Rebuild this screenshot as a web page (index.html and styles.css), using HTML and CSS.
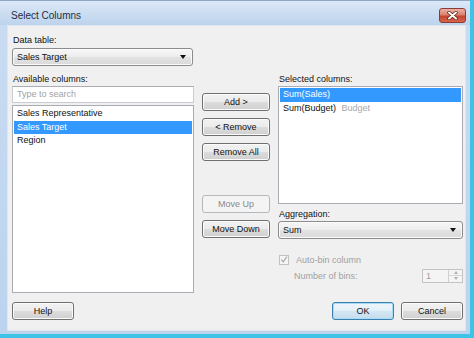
FILE: index.html
```html
<!DOCTYPE html>
<html lang="en">
  <head>
    <meta charset="UTF-8" />
    <title>Select Columns</title>
    <link rel="stylesheet" href="styles.css">
  </head>
  <body>
    <div class="window">
      <div class="titlebar">
        <span class="title">Select Columns</span>
        <div class="close">
          <svg width="11" height="9" viewBox="0 0 11 9">
            <path d="M2 1.5 L9 7.5 M9 1.5 L2 7.5" stroke="#5a1c14" stroke-width="3.4" stroke-linecap="round" />
            <path d="M2 1.5 L9 7.5 M9 1.5 L2 7.5" stroke="#ffffff" stroke-width="2" stroke-linecap="round" />
          </svg>
        </div>
      </div>

      <div class="panel">
        <div class="top">
          <div class="label">Data table:</div>
          <div class="combo left-combo">
            <span>Sales Target</span>
            <span class="arrow"></span>
          </div>
        </div>

        <div class="columns">
          <div class="col">
            <div class="label">Available columns:</div>
            <div class="search">Type to search</div>
            <ul class="list available">
              <li>Sales Representative</li>
              <li class="selected">Sales Target</li>
              <li>Region</li>
            </ul>
          </div>

          <div class="col actions">
            <button>Add &gt;</button>
            <button>&lt; Remove</button>
            <button>Remove All</button>
            <button class="disabled move-up">Move Up</button>
            <button>Move Down</button>
          </div>

          <div class="col">
            <div class="label">Selected columns:</div>
            <ul class="list chosen">
              <li class="selected">Sum(Sales)</li>
              <li>Sum(Budget) <span class="hint">Budget</span></li>
            </ul>
            <div class="label agg-label">Aggregation:</div>
            <div class="combo">
              <span>Sum</span>
              <span class="arrow"></span>
            </div>
            <div class="check-row">
              <span class="checkbox">
                <svg width="9" height="9" viewBox="0 0 9 9">
                  <path d="M1.5 4.5 L3.6 7 L7.8 1.2" fill="none" stroke="#a8a8a8" stroke-width="1.3" />
                </svg>
              </span>
              <span>Auto-bin column</span>
            </div>
            <div class="bins-row">
              <span>Number of bins:</span>
              <div class="spin">
                <span class="spin-value">1</span>
                <div class="spin-buttons">
                  <span class="up"></span>
                  <span class="down"></span>
                </div>
              </div>
            </div>
          </div>
        </div>

        <div class="footer">
          <button class="wide">Help</button>
          <div class="spacer"></div>
          <button class="wide default">OK</button>
          <button class="wide">Cancel</button>
        </div>
      </div>
    </div>
  </body>
</html>
```

FILE: styles.css
```css
* {
  margin: 0;
  padding: 0;
  box-sizing: border-box;
}
html,
body {
  width: 474px;
  height: 338px;
  overflow: hidden;
  background: #3cc3e6;
  font-family: "Liberation Sans", Arial, sans-serif;
  font-size: 9px;
  color: #111;
}
.window {
  width: 470px;
  height: 334px;
  display: flex;
  flex-direction: column;
  background: linear-gradient(#c9dcf2, #bcd3ee);
  border-top: 1px solid #8ea7c4;
}
.titlebar {
  height: 24px;
  display: flex;
  align-items: center;
  justify-content: space-between;
  padding: 5px 4px 0 11px;
  background: linear-gradient(#dbe8f7, #bdd3ec);
}
.title {
  font-size: 10px;
  color: #1e2d45;
}
.close {
  width: 27px;
  height: 15px;
  border: 1px solid #8c3b33;
  border-radius: 3px;
  background: linear-gradient(#eab2a5 0%, #d9826f 45%, #c5452f 55%, #d5654c 100%);
  display: flex;
  align-items: center;
  justify-content: center;
}
.panel {
  flex: 1;
  margin: 0 4px 3px 7px;
  background: #f0f0f0;
  border: 1px solid #dfe6ee;
  padding: 8px 2px 0 4px;
  display: flex;
  flex-direction: column;
}
.label {
  height: 13px;
  line-height: 13px;
  padding-left: 1px;
}
.combo {
  height: 18px;
  display: flex;
  align-items: center;
  justify-content: space-between;
  padding: 0 6px 0 4px;
  border: 1px solid #8c8c8c;
  border-radius: 3px;
  background: linear-gradient(#f6f6f6 0%, #ededed 50%, #e2e2e2 50%, #dadada 100%);
  box-shadow: inset 0 0 0 1px #fbfbfb;
}
.left-combo {
  width: 181px;
  margin-top: 1px;
}
.arrow {
  width: 0;
  height: 0;
  border-left: 3.5px solid transparent;
  border-right: 3.5px solid transparent;
  border-top: 4px solid #111;
}
.columns {
  margin-top: 7px;
  display: grid;
  grid-template-columns: 182px 68px 185px;
  column-gap: 8px;
  align-items: start;
}
.col {
  display: flex;
  flex-direction: column;
}
.search {
  height: 17px;
  padding: 0 4px;
  line-height: 15px;
  border: 1px solid #c9ccd2;
  border-top-color: #abadb3;
  background: #fff;
  color: #a2a2a2;
}
.list {
  list-style: none;
  background: #fff;
  border: 1px solid #a9acb2;
  padding: 1px;
}
.list li {
  height: 13.5px;
  line-height: 13.5px;
  padding-left: 3px;
}
.list li.selected {
  background: #3399ff;
  color: #fff;
}
.available {
  margin-top: 2px;
  height: 188px;
}
.chosen {
  height: 118px;
}
.hint {
  color: #a8a8a8;
  margin-left: 3px;
}
.actions {
  padding-top: 20px;
  gap: 7px;
}
button {
  height: 18px;
  font-family: inherit;
  font-size: 9px;
  color: #111;
  border: 1px solid #707070;
  border-radius: 3px;
  background: linear-gradient(#f2f2f2 0%, #ebebeb 50%, #dddddd 50%, #cfcfcf 100%);
  box-shadow: inset 0 0 0 1px #fbfbfb;
}
button.disabled {
  border-color: #b4b8ba;
  background: #f4f4f4;
  color: #8a8a8a;
  box-shadow: none;
}
.move-up {
  margin-top: 27px;
}
.agg-label {
  margin-top: 4px;
}
.check-row {
  margin-top: 14px;
  height: 13px;
  display: flex;
  align-items: center;
  gap: 7px;
  padding-left: 1px;
  color: #a0a0a0;
}
.checkbox {
  width: 10px;
  height: 10px;
  border: 1px solid #c2c2c2;
  background: #f4f4f4;
  display: flex;
  align-items: center;
  justify-content: center;
}
.bins-row {
  margin-top: 2px;
  height: 15px;
  display: flex;
  align-items: center;
  justify-content: space-between;
  padding-left: 16px;
  color: #a0a0a0;
}
.spin {
  width: 41px;
  height: 14px;
  display: flex;
  border: 1px solid #c4c4c4;
  background: #f4f4f4;
}
.spin-value {
  flex: 1;
  padding-left: 3px;
  line-height: 12px;
  color: #9c9c9c;
}
.spin-buttons {
  width: 14px;
  display: flex;
  flex-direction: column;
  border-left: 1px solid #d0d0d0;
}
.spin-buttons span {
  flex: 1;
  display: flex;
  align-items: center;
  justify-content: center;
}
.spin-buttons .up {
  border-bottom: 1px solid #d6d6d6;
}
.spin-buttons .up::after {
  content: "";
  border-left: 2.5px solid transparent;
  border-right: 2.5px solid transparent;
  border-bottom: 3px solid #b0b0b0;
}
.spin-buttons .down::after {
  content: "";
  border-left: 2.5px solid transparent;
  border-right: 2.5px solid transparent;
  border-top: 3px solid #b0b0b0;
}
.footer {
  margin-top: 9px;
  display: flex;
  gap: 7px;
}
.footer .wide {
  width: 62px;
}
.spacer {
  flex: 1;
}
button.default {
  border-color: #3c7fb1;
  box-shadow: inset 0 0 0 1px #a6dcf6;
  background: linear-gradient(#eef6fb 0%, #e3eff8 50%, #d3e6f3 50%, #c6dcec 100%);
}
```
